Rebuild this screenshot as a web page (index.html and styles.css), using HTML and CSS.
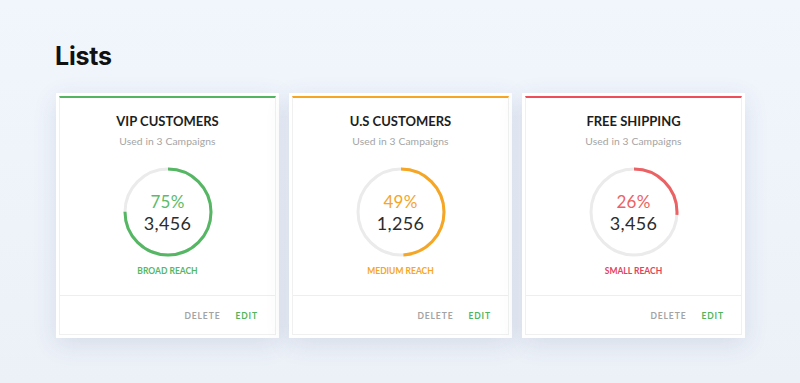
FILE: index.html
```html
<!DOCTYPE html>
<html lang="en">
<head>
    <meta charset="UTF-8">
    <meta name="viewport" content="width=device-width, initial-scale=1.0">
    <title>Lists</title>
    <link rel="stylesheet" href="styles.css">
</head>
<body>

<main class="page">
    <h1 class="page-title">Lists</h1>

    <div class="lists">
        <div class="card-frame">
            <div class="card green">
                <div class="card-body">
                    <h2 class="card-title">VIP CUSTOMERS</h2>
                    <p class="card-sub">Used in 3 Campaigns</p>
                    <div class="ring">
                        <svg width="92" height="92" viewBox="0 0 92 92">
                            <circle class="ring-track" cx="46" cy="46" r="43"></circle>
                            <circle class="ring-bar" cx="46" cy="46" r="43" style="stroke-dasharray: 202.6 270.2"></circle>
                        </svg>
                        <div class="ring-text">
                            <span class="ring-pct">75%</span>
                            <span class="ring-num">3,456</span>
                        </div>
                    </div>
                    <p class="reach">BROAD REACH</p>
                </div>
                <div class="card-footer">
                    <button class="btn-delete">DELETE</button>
                    <button class="btn-edit">EDIT</button>
                </div>
            </div>
        </div>

        <div class="card-frame">
            <div class="card orange">
                <div class="card-body">
                    <h2 class="card-title">U.S CUSTOMERS</h2>
                    <p class="card-sub">Used in 3 Campaigns</p>
                    <div class="ring">
                        <svg width="92" height="92" viewBox="0 0 92 92">
                            <circle class="ring-track" cx="46" cy="46" r="43"></circle>
                            <circle class="ring-bar" cx="46" cy="46" r="43" style="stroke-dasharray: 132.4 270.2"></circle>
                        </svg>
                        <div class="ring-text">
                            <span class="ring-pct">49%</span>
                            <span class="ring-num">1,256</span>
                        </div>
                    </div>
                    <p class="reach">MEDIUM REACH</p>
                </div>
                <div class="card-footer">
                    <button class="btn-delete">DELETE</button>
                    <button class="btn-edit">EDIT</button>
                </div>
            </div>
        </div>

        <div class="card-frame">
            <div class="card red">
                <div class="card-body">
                    <h2 class="card-title">FREE SHIPPING</h2>
                    <p class="card-sub">Used in 3 Campaigns</p>
                    <div class="ring">
                        <svg width="92" height="92" viewBox="0 0 92 92">
                            <circle class="ring-track" cx="46" cy="46" r="43"></circle>
                            <circle class="ring-bar" cx="46" cy="46" r="43" style="stroke-dasharray: 70.3 270.2"></circle>
                        </svg>
                        <div class="ring-text">
                            <span class="ring-pct">26%</span>
                            <span class="ring-num">3,456</span>
                        </div>
                    </div>
                    <p class="reach">SMALL REACH</p>
                </div>
                <div class="card-footer">
                    <button class="btn-delete">DELETE</button>
                    <button class="btn-edit">EDIT</button>
                </div>
            </div>
        </div>
    </div>
</main>

</body>
</html>
```

FILE: styles.css
```css
body {
    margin: 0;
    height: 383px;
    background: linear-gradient(180deg, #f1f6fd 0%, #ecf1f8 100%);
    font-family: Lato, "Open Sans", sans-serif;
    color: #222222;
}

.page {
    padding: 40px 0 0 56px;
}

.page-title {
    margin: 0 0 21px -1px;
    font-family: Inter, "Noto Sans", sans-serif;
    font-size: 25px;
    font-weight: 700;
    line-height: 32px;
    color: #111111;
    letter-spacing: -0.2px;
}

.lists {
    display: flex;
    gap: 10px;
}

.card-frame {
    width: 217px;
    padding: 3px;
    background-color: #ffffff;
    box-shadow: 0 6px 22px rgba(60, 80, 120, 0.13);
}

.card {
    border: 1px solid #f0f0f0;
    border-top: 2px solid;
    display: flex;
    flex-direction: column;
    height: 236px;
}

.card.green { border-top-color: #52b560; }
.card.orange { border-top-color: #f6a623; }
.card.red { border-top-color: #ee4d5a; }

.card-body {
    flex: 1;
    display: flex;
    flex-direction: column;
    align-items: center;
    padding-top: 15px;
}

.card-title {
    margin: 0;
    font-size: 13px;
    font-weight: 700;
    line-height: 17px;
    color: #1e1e1e;
}

.card-sub {
    margin: 4px 0 0;
    font-size: 10.3px;
    line-height: 14px;
    color: #a4a4a4;
    letter-spacing: 0.1px;
}

.ring {
    position: relative;
    width: 92px;
    height: 92px;
    margin-top: 18px;
}

.ring svg {
    display: block;
    transform: rotate(-90deg);
}

.ring-track {
    fill: none;
    stroke: #ebebeb;
    stroke-width: 3;
}

.ring-bar {
    fill: none;
    stroke-width: 3;
}

.green .ring-bar { stroke: #55b763; }
.orange .ring-bar { stroke: #f6a623; }
.red .ring-bar { stroke: #ec6264; }

.ring-text {
    position: absolute;
    inset: 0;
    display: flex;
    flex-direction: column;
    align-items: center;
    justify-content: center;
    padding-top: 1px;
    font-family: Lato, sans-serif;
    letter-spacing: 0.3px;
}

.ring-pct {
    font-size: 17px;
    line-height: 20px;
}

.ring-num {
    font-size: 18px;
    line-height: 22px;
    color: #2c2c2c;
}

.green .ring-pct { color: #5cbb69; }
.orange .ring-pct { color: #f4a52a; }
.red .ring-pct { color: #ec6264; }

.reach {
    margin: 7px 0 0;
    font-size: 8.5px;
    font-weight: 700;
    line-height: 12px;
}

.green .reach { color: #55b763; }
.orange .reach { color: #f6a623; }
.red .reach { color: #e5425a; }

.card-footer {
    height: 36px;
    border-top: 1px solid #eeeeee;
    display: flex;
    justify-content: flex-end;
    align-items: center;
    gap: 15px;
    padding: 2px 17px 0 0;
}

.card-footer button {
    background: transparent;
    border: none;
    padding: 0;
    font-family: Lato, sans-serif;
    font-size: 8.5px;
    font-weight: 700;
    letter-spacing: 0.9px;
    cursor: pointer;
}

.btn-delete {
    color: #a3a3a3;
}

.btn-edit {
    color: #4fb45d;
}
```
